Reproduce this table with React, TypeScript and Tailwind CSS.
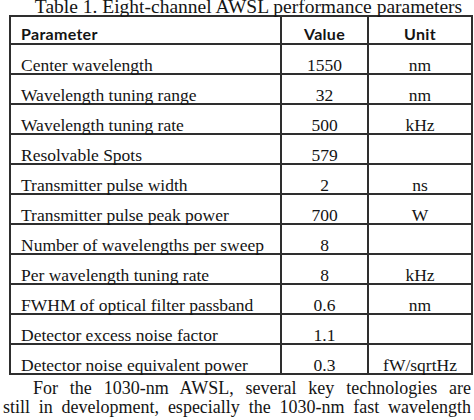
import React from "react";

const rows: [string, string, string][] = [
  ["Center wavelength", "1550", "nm"],
  ["Wavelength tuning range", "32", "nm"],
  ["Wavelength tuning rate", "500", "kHz"],
  ["Resolvable Spots", "579", ""],
  ["Transmitter pulse width", "2", "ns"],
  ["Transmitter pulse peak power", "700", "W"],
  ["Number of wavelengths per sweep", "8", ""],
  ["Per wavelength tuning rate", "8", "kHz"],
  ["FWHM of optical filter passband", "0.6", "nm"],
  ["Detector excess noise factor", "1.1", ""],
  ["Detector noise equivalent power", "0.3", "fW/sqrtHz"],
];

const serif = { fontFamily: '"Liberation Serif", "Times New Roman", serif' };
const sans = { fontFamily: 'Lato, "Open Sans", sans-serif' };

function Cell({ children, first, header }: { children: React.ReactNode; first?: boolean; header?: boolean }) {
  return (
    <div
      className={
        "border-r-2 border-b-2 border-[#2e2e2e] flex items-end whitespace-nowrap " +
        (first ? "justify-start pl-[10px] " : "justify-center ") +
        (header ? "h-[28px] pb-[1px]" : "h-[30px] pb-[2px]")
      }
    >
      {header ? (
        <span className="text-[16px] leading-[16px] font-bold tracking-[0.3px]" style={sans}>
          {children}
        </span>
      ) : (
        <span className="text-[17.5px] leading-[12px]">{children}</span>
      )}
    </div>
  );
}

export default function App() {
  return (
    <div className="w-[474px] h-[420px] overflow-hidden bg-white text-[#141414]" style={serif}>
      <div className="h-[18px]">
        <div className="mt-[-3px] text-center text-[19.5px] leading-[19.5px] whitespace-nowrap pl-[23px]">
          Table 1. Eight-channel AWSL performance parameters
        </div>
      </div>
      <div className="ml-[9px] w-[464px] border-l-2 border-t-2 border-[#2e2e2e] grid grid-cols-[271px_87px_104px]">
        <Cell first header>Parameter</Cell>
        <Cell header>Value</Cell>
        <Cell header>Unit</Cell>
        {rows.map(([p, v, u]) => (
          <React.Fragment key={p}>
            <Cell first>{p}</Cell>
            <Cell>{v}</Cell>
            <Cell>{u}</Cell>
          </React.Fragment>
        ))}
      </div>
      <div className="mt-[4px] text-[18px] leading-[19px] px-[3px]">
        <div className="pl-[30px] text-justify" style={{ textAlignLast: "justify" }}>
          For the 1030-nm AWSL, several key technologies are
        </div>
        <div className="text-justify whitespace-nowrap" style={{ textAlignLast: "justify" }}>
          still in development, especially the 1030-nm fast wavelength
        </div>
      </div>
    </div>
  );
}
